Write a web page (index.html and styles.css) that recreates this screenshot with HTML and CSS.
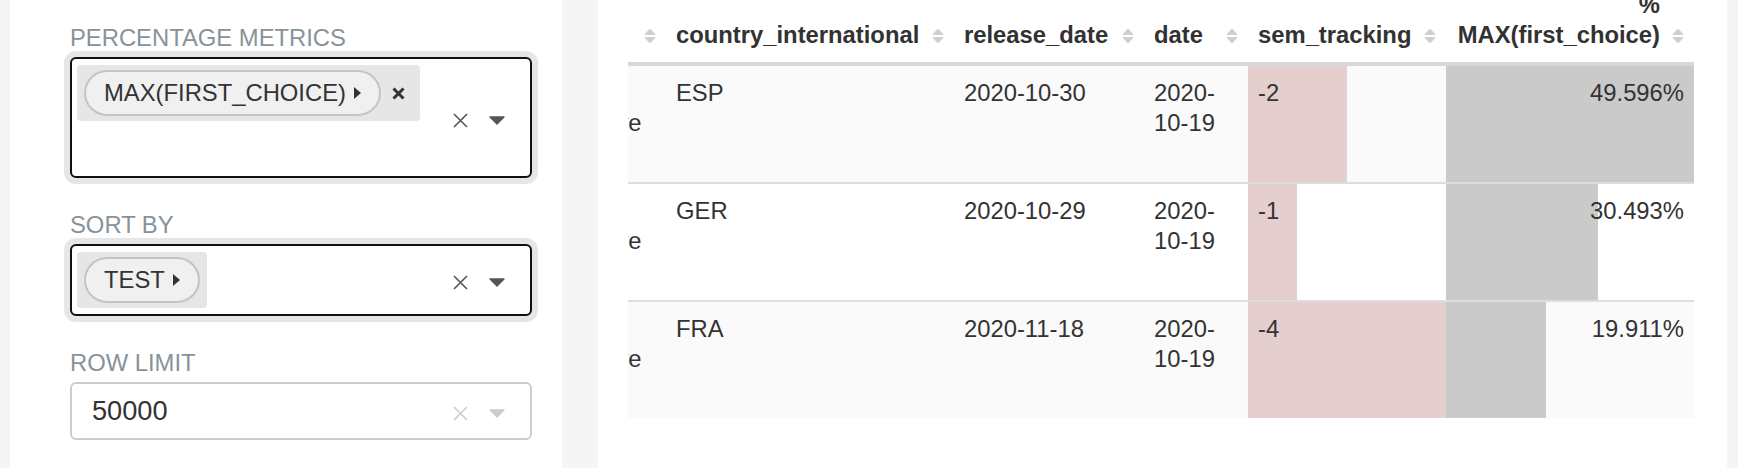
FILE: index.html
```html
<!DOCTYPE html>
<html lang="en">
<head>
  <meta charset="UTF-8">
  <meta name="viewport" content="width=device-width, initial-scale=1.0">
  <title>Table chart</title>
  <link rel="stylesheet" href="styles.css">
</head>
<body>
  <div class="page">
    <aside class="controls">
      <div class="control">
        <div class="control-label">Percentage metrics</div>
        <div class="select is-focused">
          <div class="select-values">
            <div class="tag">
              <span class="pill">MAX(FIRST_CHOICE)<span class="pill-caret"></span></span>
              <span class="tag-remove">
                <svg width="13" height="13" viewBox="0 0 13 13"><path d="M1.5 1.5 L11.5 11.5 M11.5 1.5 L1.5 11.5" stroke="#333" stroke-width="3"/></svg>
              </span>
            </div>
            <div class="select-input"></div>
          </div>
          <div class="select-indicators">
            <svg width="15" height="15" viewBox="0 0 15 15"><path d="M1 1 L14 14 M14 1 L1 14" stroke="#555" stroke-width="1.6"/></svg>
            <svg width="16" height="9" viewBox="0 0 16 9"><polygon points="1,1 15,1 8,8" fill="#555" stroke="#555" stroke-width="1.4" stroke-linejoin="round"/></svg>
          </div>
        </div>
      </div>

      <div class="control">
        <div class="control-label">Sort by</div>
        <div class="select is-focused">
          <div class="select-values">
            <div class="tag">
              <span class="pill">TEST<span class="pill-caret"></span></span>
            </div>
          </div>
          <div class="select-indicators">
            <svg width="15" height="15" viewBox="0 0 15 15"><path d="M1 1 L14 14 M14 1 L1 14" stroke="#555" stroke-width="1.6"/></svg>
            <svg width="16" height="9" viewBox="0 0 16 9"><polygon points="1,1 15,1 8,8" fill="#555" stroke="#555" stroke-width="1.4" stroke-linejoin="round"/></svg>
          </div>
        </div>
      </div>

      <div class="control">
        <div class="control-label">Row limit</div>
        <div class="select select-single">
          <div class="select-value">50000</div>
          <div class="select-indicators">
            <svg width="15" height="15" viewBox="0 0 15 15"><path d="M1 1 L14 14 M14 1 L1 14" stroke="#ccc" stroke-width="1.6"/></svg>
            <svg width="16" height="9" viewBox="0 0 16 9"><polygon points="1,1 15,1 8,8" fill="#ccc" stroke="#ccc" stroke-width="1.4" stroke-linejoin="round"/></svg>
          </div>
        </div>
      </div>
    </aside>

    <main class="panel">
      <div class="table-wrap">
        <table class="data-table">
          <colgroup>
            <col class="col-type">
            <col class="col-country">
            <col class="col-release">
            <col class="col-date">
            <col class="col-sem">
            <col class="col-max">
          </colgroup>
          <thead>
            <tr>
              <th><div class="th-inner"><span class="th-text">type</span><svg class="sort" width="12" height="16" viewBox="0 0 12 16"><polygon points="1,6.5 6,1 11,6.5"/><polygon points="1,9.5 6,15 11,9.5"/></svg></div></th>
              <th><div class="th-inner"><span class="th-text">country_international</span><svg class="sort" width="12" height="16" viewBox="0 0 12 16"><polygon points="1,6.5 6,1 11,6.5"/><polygon points="1,9.5 6,15 11,9.5"/></svg></div></th>
              <th><div class="th-inner"><span class="th-text">release_date</span><svg class="sort" width="12" height="16" viewBox="0 0 12 16"><polygon points="1,6.5 6,1 11,6.5"/><polygon points="1,9.5 6,15 11,9.5"/></svg></div></th>
              <th><div class="th-inner"><span class="th-text">date</span><svg class="sort" width="12" height="16" viewBox="0 0 12 16"><polygon points="1,6.5 6,1 11,6.5"/><polygon points="1,9.5 6,15 11,9.5"/></svg></div></th>
              <th><div class="th-inner"><span class="th-text">sem_tracking</span><svg class="sort" width="12" height="16" viewBox="0 0 12 16"><polygon points="1,6.5 6,1 11,6.5"/><polygon points="1,9.5 6,15 11,9.5"/></svg></div></th>
              <th class="num"><div class="th-inner"><span class="th-text">% MAX(first_choice)</span><svg class="sort" width="12" height="16" viewBox="0 0 12 16"><polygon points="1,6.5 6,1 11,6.5"/><polygon points="1,9.5 6,15 11,9.5"/></svg></div></th>
            </tr>
          </thead>
          <tbody>
            <tr>
              <td>Wide<br>Exclusive<br>Early</td>
              <td>ESP</td>
              <td>2020-10-30</td>
              <td>2020-<wbr>10-19</td>
              <td class="bar-neg" style="--bar: 50%">-2</td>
              <td class="num bar-pos" style="--bar: 100%">49.596%</td>
            </tr>
            <tr>
              <td>Wide<br>Exclusive<br>Early</td>
              <td>GER</td>
              <td>2020-10-29</td>
              <td>2020-<wbr>10-19</td>
              <td class="bar-neg" style="--bar: 25%">-1</td>
              <td class="num bar-pos" style="--bar: 61.48%">30.493%</td>
            </tr>
            <tr>
              <td>Wide<br>Exclusive<br>Early</td>
              <td>FRA</td>
              <td>2020-11-18</td>
              <td>2020-<wbr>10-19</td>
              <td class="bar-neg" style="--bar: 100%">-4</td>
              <td class="num bar-pos" style="--bar: 40.15%">19.911%</td>
            </tr>
          </tbody>
        </table>
      </div>
    </main>
  </div>
</body>
</html>
```

FILE: styles.css
```css
* {
  margin: 0;
  padding: 0;
  box-sizing: border-box;
}

body {
  font-family: 'Liberation Sans', Arial, sans-serif;
  background: #f5f5f5;
  color: #333;
  overflow: hidden;
}

.page {
  display: flex;
  gap: 36px;
  padding-left: 10px;
  min-height: 100vh;
}

/* left: control panel */
.controls {
  width: 552px;
  flex-shrink: 0;
  background: white;
  padding: 23px 30px 0 60px;
}

.control + .control {
  margin-top: 32px;
}

.control-label {
  color: #879399;
  font-size: 23.8px;
  line-height: 30px;
  text-transform: uppercase;
  margin-bottom: 4px;
}

.select {
  display: flex;
  width: 462px;
  background: white;
  border: 2px solid #ccc;
  border-radius: 6px;
  padding: 6px 0 6px 5px;
}

.select.is-focused {
  border-color: #111;
  box-shadow: 0 0 0 6px #e6e6e6;
}

.select-values {
  flex: 1;
  display: flex;
  flex-wrap: wrap;
  align-items: flex-start;
}

.tag {
  display: flex;
  align-items: center;
  height: 56px;
  padding: 0 7px;
  background: #e6e6e6;
  border-radius: 4px;
}

.pill {
  display: flex;
  align-items: center;
  height: 46px;
  padding: 0 18px;
  background: #f0f0f0;
  border: 2px solid #c4c4c4;
  border-radius: 23px;
  font-size: 23.8px;
  color: #333;
}

.pill-caret {
  width: 0;
  height: 0;
  margin-left: 8px;
  border-left: 7px solid #333;
  border-top: 6.5px solid transparent;
  border-bottom: 6.5px solid transparent;
}

.tag-remove {
  display: flex;
  margin-left: 11px;
  margin-right: 8px;
}

.select-input {
  width: 100%;
  height: 49px;
}

.select-indicators {
  display: flex;
  align-items: center;
  gap: 21px;
  align-self: center;
  padding: 5px 25px 0 0;
}

.select-single {
  height: 58px;
  padding: 0 0 0 20px;
  align-items: center;
}

.select-value {
  flex: 1;
  font-size: 27.2px;
  color: #333;
}

/* right: table panel */
.panel {
  width: 1129px;
  flex-shrink: 0;
  background: white;
  padding: 0 33px 0 30px;
}

.table-wrap {
  overflow: hidden;
  margin-top: -22px;
}

.data-table {
  width: 1163px;
  margin-left: -97px;
  table-layout: fixed;
  border-collapse: separate;
  border-spacing: 0;
  font-size: 23.8px;
  line-height: 30px;
  color: #333;
}

.col-type { width: 135px; }
.col-country { width: 288px; }
.col-release { width: 190px; }
.col-date { width: 104px; }
.col-sem { width: 198px; }
.col-max { width: 248px; }

.data-table th {
  padding: 12px 10px;
  vertical-align: bottom;
  text-align: left;
  font-weight: bold;
  color: #323232;
  border-bottom: 4px solid #d3d9dd;
}

.th-inner {
  display: flex;
  align-items: flex-end;
  gap: 12px;
}

.th-text {
  flex: 1;
}

.num .th-text {
  text-align: right;
}

.sort {
  flex-shrink: 0;
  margin-bottom: 6px;
  fill: #d0d0d0;
  stroke: #d0d0d0;
  stroke-width: 1;
  stroke-linejoin: round;
}

.data-table td {
  padding: 12px 10px 14px;
  vertical-align: top;
}

.data-table tbody tr:nth-child(odd) td {
  background-color: #fafafa;
}

.data-table tbody tr:not(:last-child) td {
  border-bottom: 2px solid #d9dee1;
}

.data-table td.num {
  text-align: right;
}

.data-table tbody tr td.bar-neg {
  background-image: linear-gradient(90deg, #e4cfce var(--bar), transparent var(--bar));
}

.data-table tbody tr td.bar-pos {
  background-image: linear-gradient(90deg, #cacaca var(--bar), transparent var(--bar));
}
```
